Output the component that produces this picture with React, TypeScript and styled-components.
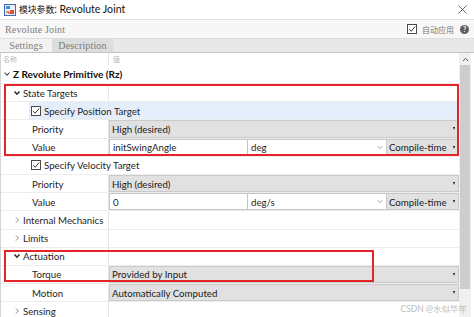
import React from 'react';
import styled, { createGlobalStyle } from 'styled-components';

const GlobalStyle = createGlobalStyle`
  html, body { margin: 0; padding: 0; background: #ffffff; }
  body { font-family: Lato, "Noto Sans", "Noto Sans CJK SC", sans-serif; }
  * { box-sizing: border-box; }
`;

const Window = styled.div`
  position: relative;
  width: 474px;
  height: 317px;
  overflow: hidden;
  display: flex;
  flex-direction: column;
  background: #ffffff;
`;

const TitleBar = styled.div`
  flex: none;
  height: 20px;
  display: flex;
  align-items: center;
  gap: 3px;
  padding: 0 7px 0 4px;
  border-bottom: 1px solid #e2e2e2;
`;

const TitleText = styled.span`
  font-size: 10.6px;
  color: #151515;
  white-space: pre;
`;

const Cjk = styled.span<{ $size?: number }>`
  font-family: "Noto Sans CJK SC", sans-serif;
  font-size: ${(p) => p.$size ?? 8.4}px;
`;

const CloseButton = styled.div`
  margin-left: auto;
  display: flex;
  align-items: center;
`;

const InfoBar = styled.div`
  flex: none;
  height: 19px;
  display: flex;
  align-items: center;
  padding: 0 5px 0 5px;
  background: #f7f7f7;
  border-bottom: 1px solid #dedede;
`;

const SerifText = styled.span`
  font-family: "Liberation Serif", serif;
  font-size: 10px;
  letter-spacing: 0.15px;
  color: #7c7c7c;
`;

const AutoApply = styled.div`
  margin-left: auto;
  display: flex;
  align-items: center;
  gap: 5px;
  color: #777777;
`;

const HelpIcon = styled.div`
  margin-left: 6px;
  display: flex;
  align-items: center;
`;

const TabBar = styled.div`
  flex: none;
  height: 14px;
  display: flex;
  background: #e8e8e8;
  border-bottom: 1px solid #c4c4c4;
`;

const Tab = styled.div<{ $active?: boolean; $width: number }>`
  width: ${(p) => p.$width}px;
  display: flex;
  align-items: center;
  justify-content: center;
  background: ${(p) => (p.$active ? '#f3f3f3' : '#dddddd')};
`;

const Body = styled.div`
  flex: 1;
  display: flex;
  min-height: 0;
`;

const TreePane = styled.div`
  width: 459px;
  flex: none;
  display: flex;
  flex-direction: column;
  border-left: 1px solid #d4d4d4;
`;

const HeaderRow = styled.div`
  height: 12px;
  flex: none;
  display: grid;
  grid-template-columns: 108px 1fr;
  color: #b8b8b8;
`;

const HeaderCell = styled.div<{ $divider?: boolean }>`
  display: flex;
  align-items: center;
  padding-left: ${(p) => (p.$divider ? 2 : 4)}px;
  border-right: ${(p) => (p.$divider ? '1px solid #e6e6e6' : 'none')};
`;

const Row = styled.div<{ $height?: number }>`
  height: ${(p) => p.$height ?? 18.2}px;
  flex: none;
  display: grid;
  grid-template-columns: 108px 1fr;
  border-bottom: 1px solid #ededed;
  font-size: 9.7px;
  color: #1e1e1e;
`;

const FullRow = styled.div<{ $height?: number }>`
  height: ${(p) => p.$height ?? 18.2}px;
  flex: none;
  display: flex;
  align-items: stretch;
  border-bottom: 1px solid #ededed;
  font-size: 9.7px;
  color: #1e1e1e;
`;

const LabelCell = styled.div<{ $indent: number; $divider?: boolean }>`
  display: flex;
  align-items: center;
  padding-left: ${(p) => p.$indent}px;
  white-space: nowrap;
  border-right: ${(p) => (p.$divider ? '1px solid #e6e6e6' : 'none')};
`;

const ChevronBox = styled.span`
  width: 10px;
  height: 10px;
  display: inline-flex;
  align-items: center;
  justify-content: center;
  margin-right: 1px;
`;

const BoldTitle = styled.span`
  font-weight: 700;
  font-size: 10px;
  color: #111111;
`;

const CheckHighlight = styled.div<{ $selected?: boolean }>`
  flex: 1;
  margin-left: 28px;
  display: flex;
  align-items: center;
  gap: 3px;
  padding-left: 2px;
  background: ${(p) => (p.$selected ? '#e3eefa' : 'transparent')};
`;

const CheckBox = styled.span`
  width: 10px;
  height: 10px;
  flex: none;
  border: 1px solid #4a4a4a;
  background: #ffffff;
  display: inline-flex;
  align-items: center;
  justify-content: center;
`;

const ValueArea = styled.div`
  display: flex;
  min-width: 0;
`;

const SelectCell = styled.div<{ $width?: number }>`
  ${(p) => (p.$width ? `width: ${p.$width}px; flex: none;` : 'flex: 1;')}
  display: flex;
  align-items: center;
  padding: 0 3px 0 2px;
  background: #e1e1e1;
  border: 1px solid #cacaca;
  white-space: nowrap;
  color: #1a1a1a;
`;

const InputCell = styled.div<{ $width: number }>`
  width: ${(p) => p.$width}px;
  flex: none;
  display: flex;
  align-items: center;
  padding: 0 3px;
  background: #ffffff;
  border: 1px solid #c4c4c4;
  border-right: none;
  white-space: nowrap;
`;

const UnitCell = styled.div<{ $width: number }>`
  width: ${(p) => p.$width}px;
  flex: none;
  display: flex;
  align-items: center;
  padding: 0 3px;
  background: #ffffff;
  border: 1px solid #c4c4c4;
  border-right: none;
  white-space: nowrap;
`;

const Grow = styled.span`
  flex: 1;
`;

const TinyArrow = styled.span`
  width: 0;
  height: 0;
  border-left: 1.5px solid transparent;
  border-right: 1.5px solid transparent;
  border-top: 3px solid #111111;
`;

const Scrollbar = styled.div`
  width: 12px;
  flex: none;
  display: flex;
  flex-direction: column;
  background: #f0f0f0;
`;

const ScrollArrow = styled.div`
  height: 12px;
  flex: none;
  display: flex;
  align-items: center;
  justify-content: center;
`;

const ScrollThumb = styled.div`
  height: 224px;
  flex: none;
  margin: 0 1px;
  background: #cdcdcd;
`;

const RightEdge = styled.div`
  flex: 1;
  background: #ffffff;
`;

const Highlight = styled.div<{ $left: number; $top: number; $w: number; $h: number }>`
  position: absolute;
  left: ${(p) => p.$left}px;
  top: ${(p) => p.$top}px;
  width: ${(p) => p.$w}px;
  height: ${(p) => p.$h}px;
  border: 2px solid #e5242a;
  pointer-events: none;
`;

const Watermark = styled.div`
  position: absolute;
  right: 7px;
  bottom: 3px;
  font-size: 8.5px;
  color: #bdbdbd;
  font-family: Lato, "Noto Sans CJK SC", sans-serif;
  white-space: nowrap;
`;

/* ---------- icons ---------- */

const ChevronDown = ({ heavy }: { heavy?: boolean }) => (
  <svg width="8" height="8" viewBox="0 0 8 8">
    <polyline
      points="1.5,2.5 4,5.2 6.5,2.5"
      fill="none"
      stroke={heavy ? '#2a2a2a' : '#4a4a4a'}
      strokeWidth={heavy ? 1.5 : 1.1}
    />
  </svg>
);

const ChevronRight = () => (
  <svg width="8" height="8" viewBox="0 0 8 8">
    <polyline points="3,1.5 5.5,4 3,6.5" fill="none" stroke="#8a8a8a" strokeWidth="1" />
  </svg>
);

const SmallChevronDown = () => (
  <svg width="6" height="5" viewBox="0 0 6 5">
    <polyline points="0.8,1.2 3,3.6 5.2,1.2" fill="none" stroke="#9a9a9a" strokeWidth="0.9" />
  </svg>
);

const CheckMark = () => (
  <svg width="8" height="8" viewBox="0 0 8 8">
    <polyline points="1.2,4.2 3.2,6.2 7,1.6" fill="none" stroke="#333333" strokeWidth="1" />
  </svg>
);

const BlockIcon = () => (
  <svg width="12" height="12" viewBox="0 0 12 12">
    <rect x="0.5" y="0.5" width="11" height="11" fill="#e9eef6" stroke="#3f6db3" />
    <rect x="2" y="2" width="4" height="3" fill="#4b86d1" />
    <rect x="6" y="6" width="4" height="4" fill="#e0522c" />
    <path d="M2 8 L5 8 L5 10" fill="none" stroke="#c83b2a" strokeWidth="1" />
  </svg>
);

const CloseIcon = () => (
  <svg width="9" height="9" viewBox="0 0 9 9">
    <line x1="0.5" y1="0.5" x2="8.5" y2="8.5" stroke="#555555" strokeWidth="0.9" />
    <line x1="8.5" y1="0.5" x2="0.5" y2="8.5" stroke="#555555" strokeWidth="0.9" />
  </svg>
);

const QuestionIcon = () => (
  <svg width="9" height="9" viewBox="0 0 9 9">
    <circle cx="4.5" cy="4.5" r="4.5" fill="#5e5e5e" />
    <text
      x="4.5"
      y="7.2"
      textAnchor="middle"
      fontSize="7"
      fontWeight="700"
      fill="#ffffff"
      fontFamily="Lato, sans-serif"
    >
      ?
    </text>
  </svg>
);

const ScrollUpIcon = () => (
  <svg width="7" height="5" viewBox="0 0 7 5">
    <polyline points="1,4 3.5,1.3 6,4" fill="none" stroke="#555555" strokeWidth="1" />
  </svg>
);

/* ---------- rows ---------- */

type RowDef =
  | { kind: 'group'; label: string; expanded: boolean }
  | { kind: 'check'; label: string; selected?: boolean }
  | { kind: 'select'; label: string; value: string }
  | { kind: 'value'; label: string; value: string; unit: string; mode: string };

const rows: RowDef[] = [
  { kind: 'group', label: 'State Targets', expanded: true },
  { kind: 'check', label: 'Specify Position Target', selected: true },
  { kind: 'select', label: 'Priority', value: 'High (desired)' },
  { kind: 'value', label: 'Value', value: 'initSwingAngle', unit: 'deg', mode: 'Compile-time' },
  { kind: 'check', label: 'Specify Velocity Target' },
  { kind: 'select', label: 'Priority', value: 'High (desired)' },
  { kind: 'value', label: 'Value', value: '0', unit: 'deg/s', mode: 'Compile-time' },
  { kind: 'group', label: 'Internal Mechanics', expanded: false },
  { kind: 'group', label: 'Limits', expanded: false },
  { kind: 'group', label: 'Actuation', expanded: true },
  { kind: 'select', label: 'Torque', value: 'Provided by Input' },
  { kind: 'select', label: 'Motion', value: 'Automatically Computed' },
  { kind: 'group', label: 'Sensing', expanded: false },
];

const TreeRow = ({ def }: { def: RowDef }) => {
  switch (def.kind) {
    case 'group':
      return (
        <Row>
          <LabelCell $indent={11} $divider>
            <ChevronBox>{def.expanded ? <ChevronDown heavy /> : <ChevronRight />}</ChevronBox>
            {def.label}
          </LabelCell>
          <ValueArea />
        </Row>
      );
    case 'check':
      return (
        <FullRow>
          <CheckHighlight $selected={def.selected}>
            <CheckBox>
              <CheckMark />
            </CheckBox>
            {def.label}
          </CheckHighlight>
        </FullRow>
      );
    case 'select':
      return (
        <Row>
          <LabelCell $indent={31} $divider>
            {def.label}
          </LabelCell>
          <ValueArea>
            <SelectCell>
              {def.value}
              <Grow />
              <TinyArrow />
            </SelectCell>
          </ValueArea>
        </Row>
      );
    case 'value':
      return (
        <Row>
          <LabelCell $indent={31} $divider>
            {def.label}
          </LabelCell>
          <ValueArea>
            <InputCell $width={138}>{def.value}</InputCell>
            <UnitCell $width={139}>
              {def.unit}
              <Grow />
              <SmallChevronDown />
            </UnitCell>
            <SelectCell>
              {def.mode}
              <Grow />
              <TinyArrow />
            </SelectCell>
          </ValueArea>
        </Row>
      );
  }
};

export default function App() {
  return (
    <>
      <GlobalStyle />
      <Window>
        <TitleBar>
          <BlockIcon />
          <TitleText>
            <Cjk $size={8.8}>模块参数</Cjk>: Revolute Joint
          </TitleText>
          <CloseButton>
            <CloseIcon />
          </CloseButton>
        </TitleBar>

        <InfoBar>
          <SerifText>Revolute Joint</SerifText>
          <AutoApply>
            <CheckBox>
              <CheckMark />
            </CheckBox>
            <Cjk $size={8}>自动应用</Cjk>
          </AutoApply>
          <HelpIcon>
            <QuestionIcon />
          </HelpIcon>
        </InfoBar>

        <TabBar>
          <Tab $active $width={52}>
            <SerifText>Settings</SerifText>
          </Tab>
          <Tab $width={61}>
            <SerifText>Description</SerifText>
          </Tab>
        </TabBar>

        <Body>
          <TreePane>
            <HeaderRow>
              <HeaderCell $divider>
                <Cjk $size={7}>名称</Cjk>
              </HeaderCell>
              <HeaderCell>
                <Cjk $size={7}>值</Cjk>
              </HeaderCell>
            </HeaderRow>
            <FullRow $height={19}>
              <LabelCell $indent={1}>
                <ChevronBox>
                  <ChevronDown />
                </ChevronBox>
                <BoldTitle>Z Revolute Primitive (Rz)</BoldTitle>
              </LabelCell>
            </FullRow>
            {rows.map((r, i) => (
              <TreeRow key={i} def={r} />
            ))}
          </TreePane>
          <Scrollbar>
            <ScrollArrow>
              <ScrollUpIcon />
            </ScrollArrow>
            <ScrollThumb />
          </Scrollbar>
          <RightEdge />
        </Body>

        <Highlight $left={4} $top={84} $w={455} $h={72} />
        <Highlight $left={4} $top={250} $w={370} $h={32} />
        <Watermark>
          CSDN @<Cjk $size={8.5}>水似华年</Cjk>
        </Watermark>
      </Window>
    </>
  );
}
